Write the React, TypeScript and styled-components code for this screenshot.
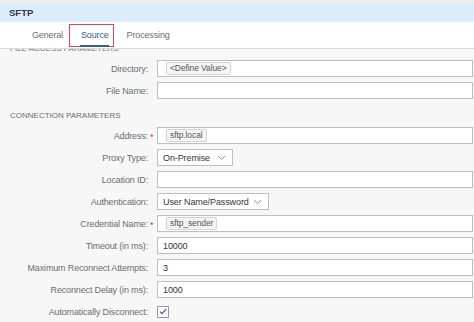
import styled, { createGlobalStyle } from "styled-components";

const GlobalStyle = createGlobalStyle`
  html, body {
    margin: 0;
    padding: 0;
    background: #f7f7f7;
    font-family: "Liberation Sans", Arial, sans-serif;
  }
`;

const Page = styled.div`
  width: 474px;
  height: 322px;
  overflow: hidden;
  display: flex;
  flex-direction: column;
  background: #f7f7f7;
`;

const TopStrip = styled.div`
  height: 3px;
  background: #ececec;
`;

const Header = styled.div`
  height: 19px;
  background: #dbedfb;
  display: flex;
  align-items: center;
  padding-left: 9px;
  font-size: 9.5px;
  font-weight: bold;
  color: #32363a;
`;

const TabBar = styled.div`
  height: 26px;
  background: #fff;
  border-bottom: 1px solid #dadada;
  display: flex;
  align-items: stretch;
  padding-left: 22px;
`;

const Tab = styled.div<{ $active?: boolean; $marked?: boolean }>`
  position: relative;
  display: flex;
  align-items: center;
  padding: 0 8px 0 10px;
  font-size: 9px;
  letter-spacing: -0.15px;
  color: ${(p) => (p.$active ? "#2f5c8a" : "#6a6d70")};
  ${(p) =>
    p.$active &&
    `
    &::after {
      content: "";
      position: absolute;
      left: 9px;
      right: 8px;
      bottom: 1px;
      height: 2px;
      background: #346187;
    }
  `}
  ${(p) =>
    p.$marked &&
    `
    &::before {
      content: "";
      position: absolute;
      left: -2px;
      right: 3px;
      top: 2px;
      bottom: 1px;
      border: 1.5px solid #e0474f;
    }
  `}
`;

const Content = styled.div`
  flex: 1;
  overflow: hidden;
`;

const SectionTitle = styled.div`
  font-size: 8px;
  color: #6a6d70;
  padding-left: 10px;
  height: 14px;
  line-height: 14px;
  margin: 10px 0 4px;
`;

const ClippedTitle = styled.div`
  height: 6px;
  overflow: hidden;
  margin-bottom: 5px;
  padding-left: 10px;

  span {
    display: block;
    margin-top: -5px;
    line-height: 10px;
    font-size: 8px;
    color: #6a6d70;
  }
`;

const Fields = styled.div`
  display: flex;
  flex-direction: column;
  gap: 5px;
`;

const Row = styled.div`
  display: grid;
  grid-template-columns: 148px 9px 1fr;
  align-items: center;
  height: 17px;
  padding-right: 1px;
`;

const Label = styled.div`
  text-align: right;
  font-size: 9px;
  letter-spacing: -0.15px;
  color: #6a6d70;
  white-space: nowrap;
`;

const Required = styled.div`
  color: #d9363e;
  font-size: 9px;
  line-height: 9px;
  padding: 3px 0 0 2px;
`;

const Input = styled.div`
  height: 17px;
  box-sizing: border-box;
  background: #fff;
  border: 1px solid #bfbfbf;
  display: flex;
  align-items: center;
  padding: 0 5px;
  font-size: 9px;
  letter-spacing: -0.1px;
  color: #32363a;
`;

const Token = styled.span`
  margin-left: 3px;
  padding: 0 3px;
  height: 11px;
  line-height: 11px;
  border: 1px solid #d5d5d5;
  border-radius: 2px;
  background: #f5f5f5;
  font-size: 8.5px;
  color: #555;
`;

const Select = styled.div<{ $width: number }>`
  width: ${(p) => p.$width}px;
  height: 17px;
  box-sizing: border-box;
  background: #fff;
  border: 1px solid #bfbfbf;
  display: flex;
  align-items: center;
  justify-content: space-between;
  padding: 0 6px 0 5px;
  font-size: 9px;
  letter-spacing: -0.1px;
  white-space: nowrap;
  color: #32363a;
`;

const Check = styled.div`
  width: 12px;
  height: 12px;
  box-sizing: border-box;
  border: 1px solid #9a9a9a;
  background: #fff;
  display: flex;
  align-items: center;
  justify-content: center;
`;

const Chevron = () => (
  <svg width="9" height="6" viewBox="0 0 9 6">
    <path d="M1 1l3.5 3.5L8 1" fill="none" stroke="#7a9fc6" strokeWidth="1" />
  </svg>
);

type Field = {
  label: string;
  required?: boolean;
  kind: "text" | "token" | "select" | "check";
  value?: string;
  width?: number;
};

const fileFields: Field[] = [
  { label: "Directory:", kind: "token", value: "<Define Value>" },
  { label: "File Name:", kind: "text" },
];

const connFields: Field[] = [
  { label: "Address:", required: true, kind: "token", value: "sftp.local" },
  { label: "Proxy Type:", kind: "select", value: "On-Premise", width: 76 },
  { label: "Location ID:", kind: "text" },
  { label: "Authentication:", kind: "select", value: "User Name/Password", width: 112 },
  { label: "Credential Name:", required: true, kind: "token", value: "sftp_sender" },
  { label: "Timeout (in ms):", kind: "text", value: "10000" },
  { label: "Maximum Reconnect Attempts:", kind: "text", value: "3" },
  { label: "Reconnect Delay (in ms):", kind: "text", value: "1000" },
  { label: "Automatically Disconnect:", kind: "check" },
];

function FieldRow({ f }: { f: Field }) {
  let control;
  if (f.kind === "select") {
    control = (
      <Select $width={f.width ?? 80}>
        {f.value}
        <Chevron />
      </Select>
    );
  } else if (f.kind === "check") {
    control = (
      <Check>
        <svg width="8" height="7" viewBox="0 0 9 8">
          <path d="M1 4.2l2.3 2.3L8 1.2" fill="none" stroke="#2f5c8a" strokeWidth="1.3" />
        </svg>
      </Check>
    );
  } else if (f.kind === "token") {
    control = (
      <Input>
        <Token>{f.value}</Token>
      </Input>
    );
  } else {
    control = <Input>{f.value}</Input>;
  }
  return (
    <Row>
      <Label>{f.label}</Label>
      <Required>{f.required ? "*" : ""}</Required>
      <div>{control}</div>
    </Row>
  );
}

export default function App() {
  return (
    <>
      <GlobalStyle />
      <Page>
        <TopStrip />
        <Header>SFTP</Header>
        <TabBar>
          <Tab>General</Tab>
          <Tab $active $marked>Source</Tab>
          <Tab>Processing</Tab>
        </TabBar>
        <Content>
          <ClippedTitle>
            <span>FILE ACCESS PARAMETERS</span>
          </ClippedTitle>
          <Fields>
            {fileFields.map((f) => (
              <FieldRow key={f.label} f={f} />
            ))}
          </Fields>
          <SectionTitle>CONNECTION PARAMETERS</SectionTitle>
          <Fields>
            {connFields.map((f) => (
              <FieldRow key={f.label} f={f} />
            ))}
          </Fields>
        </Content>
      </Page>
    </>
  );
}
